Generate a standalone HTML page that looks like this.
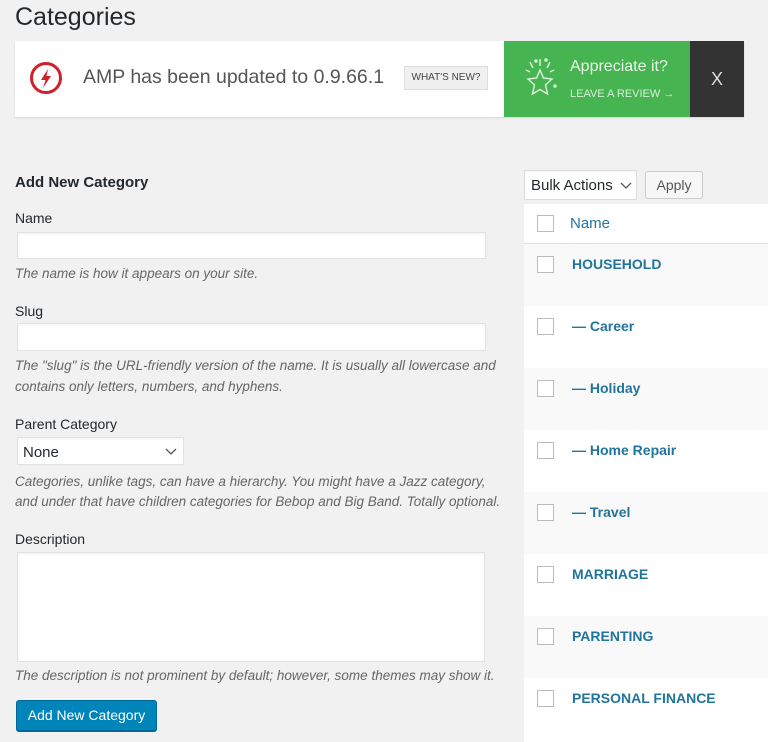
<!DOCTYPE html>
<html><head><meta charset="utf-8"><style>
*{box-sizing:border-box;margin:0;padding:0}
body{width:768px;height:742px;overflow:hidden;background:#f1f1f1;font-family:"Liberation Sans",sans-serif;color:#23282d;position:relative}
.a{position:absolute;white-space:nowrap}
.lbl{font-size:14px;color:#23282d}
.help{font-size:13.5px;font-style:italic;color:#666}
.inp{position:absolute;background:#fff;border:1px solid #e2e2e2;box-shadow:inset 0 1px 2px rgba(0,0,0,.05)}
.cb{position:absolute;left:537px;width:17px;height:17px;border:1px solid #bbb;background:#fff}
.row{position:absolute;left:524px;width:244px;height:62px}
.rt{position:absolute;left:48px;top:12px;font-size:14px;font-weight:bold;color:#21759b;white-space:nowrap}
</style></head><body>
<div class="a" style="left:15px;top:3px;font-size:25px;color:#23282d">Categories</div>

<div style="position:absolute;left:15px;top:41px;width:729px;height:76px;background:#fff;box-shadow:0 1px 2px rgba(0,0,0,.12)"></div>
<svg style="position:absolute;left:29px;top:61px" width="34" height="34" viewBox="0 0 34 34"><circle cx="17" cy="17" r="14.5" fill="none" stroke="#d0202c" stroke-width="3"/><path d="M19 8 L12 19 H16.5 L14 27 L22 15 H17.5 Z" fill="#d0202c"/></svg>
<div class="a" style="left:83px;top:66px;font-size:19.5px;color:#555">AMP has been updated to 0.9.66.1</div>
<div class="a" style="left:404px;top:66px;width:84px;height:24px;background:#f0f0f0;border:1px solid #ddd;font-size:10px;color:#444;text-align:center;line-height:22px">WHAT'S NEW?</div>
<div style="position:absolute;left:504px;top:41px;width:186px;height:76px;background:#46b450"></div>
<svg style="position:absolute;left:522px;top:56px" width="36" height="44" viewBox="0 0 36 44" fill="none" stroke="#d8f0d8" stroke-width="1.5"><path d="M18 14 L21.5 22 L30 23 L23.5 29 L25.5 38 L18 33.5 L10.5 38 L12.5 29 L6 23 L14.5 22 Z"/><path d="M8 6 L11 12 M18 3 V10 M28 6 L25 12 M4 14 L8 16 M32 14 L28 16"/><circle cx="14" cy="5" r="1" fill="#d8f0d8"/><circle cx="24" cy="4" r="1" fill="#d8f0d8"/><circle cx="33" cy="30" r="1" fill="#d8f0d8"/></svg>
<div class="a" style="left:570px;top:58px;font-size:16px;color:#e8f6e8">Appreciate it?</div>
<div class="a" style="left:570px;top:88px;font-size:11px;color:#d8f0d8">LEAVE A REVIEW →</div>
<div style="position:absolute;left:690px;top:41px;width:54px;height:76px;background:#333;color:#ddd;font-size:18px;text-align:center;line-height:76px">X</div>

<div class="a" style="left:15px;top:174px;font-size:15px;font-weight:bold">Add New Category</div>
<div class="a lbl" style="left:15px;top:210px">Name</div>
<div class="inp" style="left:17px;top:232px;width:469px;height:27px"></div>
<div class="a help" style="left:15px;top:266px">The name is how it appears on your site.</div>
<div class="a lbl" style="left:15px;top:303px">Slug</div>
<div class="inp" style="left:17px;top:323px;width:469px;height:28px"></div>
<div class="a help" style="left:15px;top:358px">The "slug" is the URL-friendly version of the name. It is usually all lowercase and</div>
<div class="a help" style="left:15px;top:379px">contains only letters, numbers, and hyphens.</div>
<div class="a lbl" style="left:15px;top:416px">Parent Category</div>
<div class="inp" style="left:17px;top:437px;width:167px;height:28px;font-size:15px;padding:6px 0 0 5px">None<svg style="position:absolute;right:6px;top:10px" width="12" height="8" viewBox="0 0 12 8"><path d="M1 1 L6 6 L11 1" fill="none" stroke="#555" stroke-width="1.3"/></svg></div>
<div class="a help" style="left:15px;top:474px">Categories, unlike tags, can have a hierarchy. You might have a Jazz category,</div>
<div class="a help" style="left:15px;top:494px">and under that have children categories for Bebop and Big Band. Totally optional.</div>
<div class="a lbl" style="left:15px;top:531px">Description</div>
<div class="inp" style="left:17px;top:552px;width:468px;height:110px"></div>
<div class="a help" style="left:15px;top:668px">The description is not prominent by default; however, some themes may show it.</div>
<div style="position:absolute;left:16px;top:700px;width:141px;height:31px;background:#0085ba;border:1px solid #006799;border-radius:3px;box-shadow:0 1px 0 #006799;color:#fff;font-size:14px;text-align:center;line-height:29px">Add New Category</div>

<div class="inp" style="left:524px;top:170px;width:113px;height:30px;font-size:15px;padding:6px 0 0 6px;border-color:#ddd">Bulk Actions<svg style="position:absolute;right:4px;top:11px" width="12" height="8" viewBox="0 0 12 8"><path d="M1 1 L6 6 L11 1" fill="none" stroke="#555" stroke-width="1.3"/></svg></div>
<div style="position:absolute;left:645px;top:171px;width:58px;height:28px;background:#f7f7f7;border:1px solid #ccc;border-radius:3px;font-size:14px;color:#555;text-align:center;line-height:26px">Apply</div>

<div style="position:absolute;left:524px;top:204px;width:244px;height:40px;background:#fff;border-bottom:1px solid #e1e1e1"></div>
<div class="cb" style="top:215px"></div>
<div class="a" style="left:570px;top:215px;font-size:15px;color:#21759b">Name</div>

<div class="row" style="top:244px;background:#f9f9f9"><div class="rt">HOUSEHOLD</div></div>
<div class="row" style="top:306px;background:#fff"><div class="rt">— Career</div></div>
<div class="row" style="top:368px;background:#f9f9f9"><div class="rt">— Holiday</div></div>
<div class="row" style="top:430px;background:#fff"><div class="rt">— Home Repair</div></div>
<div class="row" style="top:492px;background:#f9f9f9"><div class="rt">— Travel</div></div>
<div class="row" style="top:554px;background:#fff"><div class="rt">MARRIAGE</div></div>
<div class="row" style="top:616px;background:#f9f9f9"><div class="rt">PARENTING</div></div>
<div class="row" style="top:678px;background:#fff;height:64px"><div class="rt">PERSONAL FINANCE</div></div>
<div class="cb" style="top:256px"></div>
<div class="cb" style="top:318px"></div>
<div class="cb" style="top:380px"></div>
<div class="cb" style="top:442px"></div>
<div class="cb" style="top:504px"></div>
<div class="cb" style="top:566px"></div>
<div class="cb" style="top:628px"></div>
<div class="cb" style="top:690px"></div>
</body></html>
